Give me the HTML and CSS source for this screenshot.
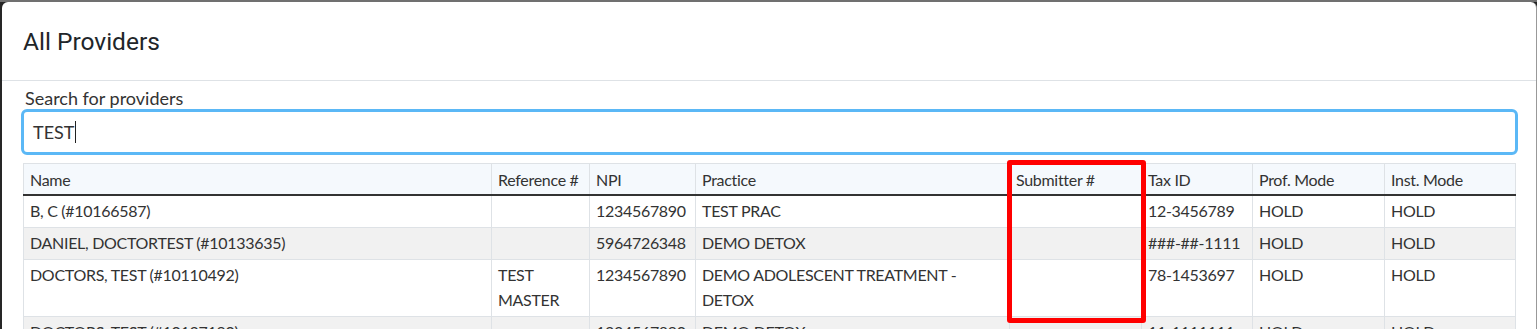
FILE: index.html
```html
<!DOCTYPE html>
<html lang="en">
<head>
    <meta charset="UTF-8">
    <meta name="viewport" content="width=device-width, initial-scale=1.0">
    <title>All Providers</title>
    <link rel="stylesheet" href="styles.css">
</head>
<body>
    <div class="modal">
        <!-- Header -->
        <div class="modal-header">
            <h2>All Providers</h2>
        </div>

        <div class="modal-body">
            <label class="search-label" for="search">Search for providers</label>
            <div class="search-box">
                <span class="search-text">TEST</span><span class="caret"></span>
            </div>

            <div class="table-wrap">
                <table class="providers">
                    <thead>
                        <tr>
                            <th class="col-name">Name</th>
                            <th class="col-ref">Reference #</th>
                            <th class="col-npi">NPI</th>
                            <th class="col-practice">Practice</th>
                            <th class="col-sub">Submitter #</th>
                            <th class="col-tax">Tax ID</th>
                            <th class="col-prof">Prof. Mode</th>
                            <th class="col-inst">Inst. Mode</th>
                        </tr>
                    </thead>
                    <tbody>
                        <tr>
                            <td>B, C (#10166587)</td>
                            <td></td>
                            <td>1234567890</td>
                            <td>TEST PRAC</td>
                            <td></td>
                            <td>12-3456789</td>
                            <td>HOLD</td>
                            <td>HOLD</td>
                        </tr>
                        <tr>
                            <td>DANIEL, DOCTORTEST (#10133635)</td>
                            <td></td>
                            <td>5964726348</td>
                            <td>DEMO DETOX</td>
                            <td></td>
                            <td>###-##-1111</td>
                            <td>HOLD</td>
                            <td>HOLD</td>
                        </tr>
                        <tr>
                            <td>DOCTORS, TEST (#10110492)</td>
                            <td>TEST MASTER</td>
                            <td>1234567890</td>
                            <td>DEMO ADOLESCENT TREATMENT - DETOX</td>
                            <td></td>
                            <td>78-1453697</td>
                            <td>HOLD</td>
                            <td>HOLD</td>
                        </tr>
                        <tr>
                            <td>DOCTORS, TEST (#10127190)</td>
                            <td></td>
                            <td>1234567890</td>
                            <td>DEMO DETOX</td>
                            <td></td>
                            <td>11-1111111</td>
                            <td>HOLD</td>
                            <td>HOLD</td>
                        </tr>
                    </tbody>
                </table>
                <!-- highlight on the Submitter column -->
                <div class="highlight"></div>
            </div>
        </div>
    </div>
</body>
</html>
```

FILE: styles.css
```css
body {
    margin: 0;
    font-family: Lato, "Noto Sans", sans-serif;
    color: #333;
    background: linear-gradient(#707070 0 2px, #262626 2px);
    height: 329px;
    overflow: hidden;
}

.modal {
    margin: 2px 0 0 2px;
    background: #fff;
    border-radius: 6px 6px 0 0;
    border-right: 1px solid #999;
    height: 400px;
}

.modal-header {
    height: 78px;
    padding: 0 21px;
    display: flex;
    align-items: center;
    border-bottom: 1px solid #dee2e6;
}

.modal-header h2 {
    margin: 0;
    font-family: Roboto, sans-serif;
    font-size: 24.5px;
    font-weight: 400;
    color: #212529;
}

.modal-body {
    padding: 8px 18px 0 19px;
}

.search-label {
    display: block;
    margin-left: 4px;
    font-size: 18px;
    line-height: 22px;
    margin-top: -2px;
}

.search-box {
    height: 40px;
    border: 3px solid #5bb8f6;
    border-radius: 6px;
    display: flex;
    align-items: center;
    padding-left: 9px;
    font-size: 18px;
}

.caret {
    display: inline-block;
    width: 1px;
    height: 22px;
    background: #222;
    margin-left: 1px;
}

.table-wrap {
    position: relative;
    margin: 8px 2px 0 2px;
}

.providers {
    width: 1493px;
    border-collapse: collapse;
    table-layout: fixed;
    font-size: 16px;
    letter-spacing: -0.3px;
    border: 1px solid #dee2e6;
}

.providers th,
.providers td {
    box-sizing: border-box;
    text-align: left;
    vertical-align: top;
    padding: 2px 6px 4px 6px;
    line-height: 25px;
    border-left: 1px solid #dee2e6;
    border-top: 1px solid #dee2e6;
    font-weight: normal;
}

.providers th {
    padding: 3px 6px 2px 6px;
    background: #f5f9fd;
    border-bottom: 2px solid #333;
}

.providers tbody tr:nth-child(even) td {
    background: #f1f1f1;
}

.col-name { width: 468px; }
.col-ref { width: 98px; }
.col-npi { width: 106px; }
.col-practice { width: 314px; }
.col-sub { width: 132px; }
.col-tax { width: 111px; }
.col-prof { width: 132px; }
.col-inst { width: 131px; }

.highlight {
    position: absolute;
    left: 984px;
    top: -3px;
    width: 129px;
    height: 153px;
    border: 5px solid #ff0000;
    border-radius: 3px;
}
```
